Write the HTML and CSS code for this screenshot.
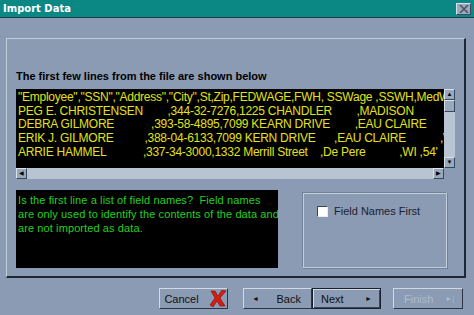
FILE: index.html
```html
<!DOCTYPE html>
<html lang="en">
<head>
  <meta charset="UTF-8" />
  <title>Import Data</title>
  <link rel="stylesheet" href="styles.css">
</head>
<body>
  <div class="window">
    <div class="titlebar">
      <span class="title">Import Data</span>
      <button class="close" title="Close">
        <svg width="10" height="8" viewBox="0 0 10 8"><path d="M1 0 L9 8 M9 0 L1 8" stroke="#4a5566" stroke-width="1.6"/></svg>
      </button>
    </div>

    <div class="content">
      <div class="panel">
        <h1 class="heading">The first few lines from the file are shown below</h1>

        <div class="preview">
          <div class="preview-main">
            <pre class="preview-text">"Employee","SSN","Address","City",St,Zip,FEDWAGE,FWH, SSWage ,SSWH,MedWage
PEG E. CHRISTENSEN        ,344-32-7276,1225 CHANDLER        ,MADISON
DEBRA GILMORE            ,393-58-4895,7099 KEARN DRIVE        ,EAU CLAIRE
ERIK J. GILMORE          ,388-04-6133,7099 KERN DRIVE      ,EAU CLAIRE           ,W
ARRIE HAMMEL            ,337-34-3000,1332 Merrill Street    ,De Pere           ,WI ,54'</pre>
            <div class="vscroll">
              <span class="sbtn">&#9650;</span>
              <span class="thumb-v"></span>
              <span class="track"></span>
              <span class="sbtn">&#9660;</span>
            </div>
          </div>
          <div class="hscroll">
            <span class="sbtn">&#9664;</span>
            <span class="track"></span>
            <span class="sbtn">&#9654;</span>
            <span class="corner"></span>
          </div>
        </div>

        <div class="lower">
          <div class="message">Is the first line a list of field names?&nbsp; Field names<br>are only used to identify the contents of the data and<br>are not imported as data.</div>
          <div class="options">
            <label class="check-label"><span class="check"></span>Field Names First</label>
          </div>
        </div>
      </div>

      <div class="buttons">
        <button class="btn btn-cancel">Cancel
          <svg width="18" height="17" viewBox="0 0 18 17"><path d="M2 1 L6 1 L9 6 L13 0 L17 1 L11 8 L16 16 L11 16 L8 11 L4 17 L1 15 L6 8 Z" fill="#d21c14" stroke="#7a0d08" stroke-width="0.6"/></svg>
        </button>
        <div class="nav">
          <button class="btn btn-back"><span class="arrow">&#9668;</span>Back</button>
          <button class="btn btn-next">Next<span class="arrow">&#9658;</span></button>
        </div>
        <button class="btn btn-finish" disabled>Finish<span class="arrow">&#9658;|</span></button>
      </div>
    </div>
  </div>
</body>
</html>
```

FILE: styles.css
```css
* {
  box-sizing: border-box;
}
body {
  margin: 0;
  background-color: #8a9bb3;
  font-family: 'Liberation Sans', Arial, sans-serif;
}
.window {
  width: 474px;
  height: 315px;
  overflow: hidden;
  background-color: #8a9bb3;
}
.titlebar {
  height: 18px;
  background-color: #0b8784;
  border-bottom: 1px solid #1a3a44;
  display: flex;
  align-items: center;
  justify-content: space-between;
  padding: 0 3px 0 3px;
}
.title {
  color: white;
  font-family: 'DejaVu Sans', sans-serif;
  font-weight: bold;
  font-size: 10px;
}
.close {
  width: 15px;
  height: 12px;
  padding: 0;
  background-color: #9aaabd;
  border: 1px solid;
  border-color: #d8e0ea #3c4858 #3c4858 #d8e0ea;
  display: flex;
  align-items: center;
  justify-content: center;
}
.content {
  padding: 20px 8px 0 6px;
}
.panel {
  height: 240px;
  border-top: 1px solid #c3cedb;
  border-left: 1px solid #c3cedb;
  border-right: 2px solid #1e2834;
  border-bottom: 2px solid #1e2834;
  padding: 31px 8px 0 9px;
}
.heading {
  margin: 0 0 6px 0;
  font-size: 11px;
  font-weight: bold;
  color: #000;
  line-height: 13px;
}
.preview {
  width: 439px;
  height: 90px;
  background-color: #000;
  display: flex;
  flex-direction: column;
}
.preview-main {
  flex: 1;
  display: flex;
  min-height: 0;
}
.preview-text {
  flex: 1;
  min-width: 0;
  margin: 0;
  padding: 2px 0 0 2px;
  overflow: hidden;
  color: #e2e21a;
  font-family: 'Liberation Sans', Arial, sans-serif;
  font-size: 12px;
  letter-spacing: -0.25px;
  line-height: 13.7px;
}
.vscroll {
  width: 11px;
  display: flex;
  flex-direction: column;
  background-color: #b9c4d3;
}
.hscroll {
  height: 11px;
  display: flex;
  background-color: #b9c4d3;
}
.track {
  flex: 1;
}
.sbtn {
  width: 11px;
  height: 11px;
  background-color: #98a8bd;
  border: 1px solid;
  border-color: #dbe2ec #39475a #39475a #dbe2ec;
  color: #000;
  font-size: 6px;
  line-height: 9px;
  text-align: center;
}
.thumb-v {
  height: 12px;
  background-color: #98a8bd;
  border: 1px solid;
  border-color: #dbe2ec #39475a #39475a #dbe2ec;
}
.corner {
  width: 11px;
  background-color: #8a9bb3;
}
.lower {
  display: flex;
  margin-top: 11px;
}
.message {
  width: 262px;
  height: 78px;
  background-color: #000;
  color: #22d022;
  font-size: 11px;
  letter-spacing: 0.1px;
  line-height: 14px;
  white-space: nowrap;
  overflow: hidden;
  padding: 3px 0 0 2px;
}
.options {
  margin-left: 24px;
  margin-top: 2px;
  width: 145px;
  height: 76px;
  border: 1px solid;
  border-color: #6f8098 #c3cedb #c3cedb #6f8098;
  box-shadow: inset 1px 1px 0 #c3cedb, 1px 1px 0 #6f8098;
  padding: 12px 0 0 14px;
}
.check-label {
  display: flex;
  align-items: center;
  gap: 6px;
  font-size: 11px;
  color: #1a2230;
}
.check {
  width: 11px;
  height: 11px;
  background-color: #fff;
  border: 1px solid;
  border-color: #3a4658 #e6ecf2 #e6ecf2 #3a4658;
}
.buttons {
  display: flex;
  align-items: center;
  margin: 10px 0 0 153px;
}
.btn {
  height: 21px;
  width: 69px;
  background-color: #8a9bb3;
  border: 1px solid;
  border-color: #d0d9e4 #2a3444 #2a3444 #d0d9e4;
  font-family: 'Liberation Sans', Arial, sans-serif;
  font-size: 11px;
  color: #111;
  display: flex;
  align-items: center;
  padding: 0;
}
.btn-cancel {
  justify-content: center;
  gap: 10px;
  padding-left: 4px;
}
.nav {
  display: flex;
  margin-left: 15px;
}
.btn-back {
  justify-content: space-between;
  padding: 0 10px 0 8px;
}
.btn-next {
  justify-content: space-between;
  padding: 0 8px 0 8px;
  border: 1px solid #1a2230;
  box-shadow: inset 1px 1px 0 #d0d9e4, inset -1px -1px 0 #3a4658;
}
.btn-finish {
  width: 70px;
  margin-left: 12px;
  justify-content: space-between;
  padding: 0 8px 0 10px;
  color: #aebbcc;
}
.arrow {
  font-size: 7px;
}
```
